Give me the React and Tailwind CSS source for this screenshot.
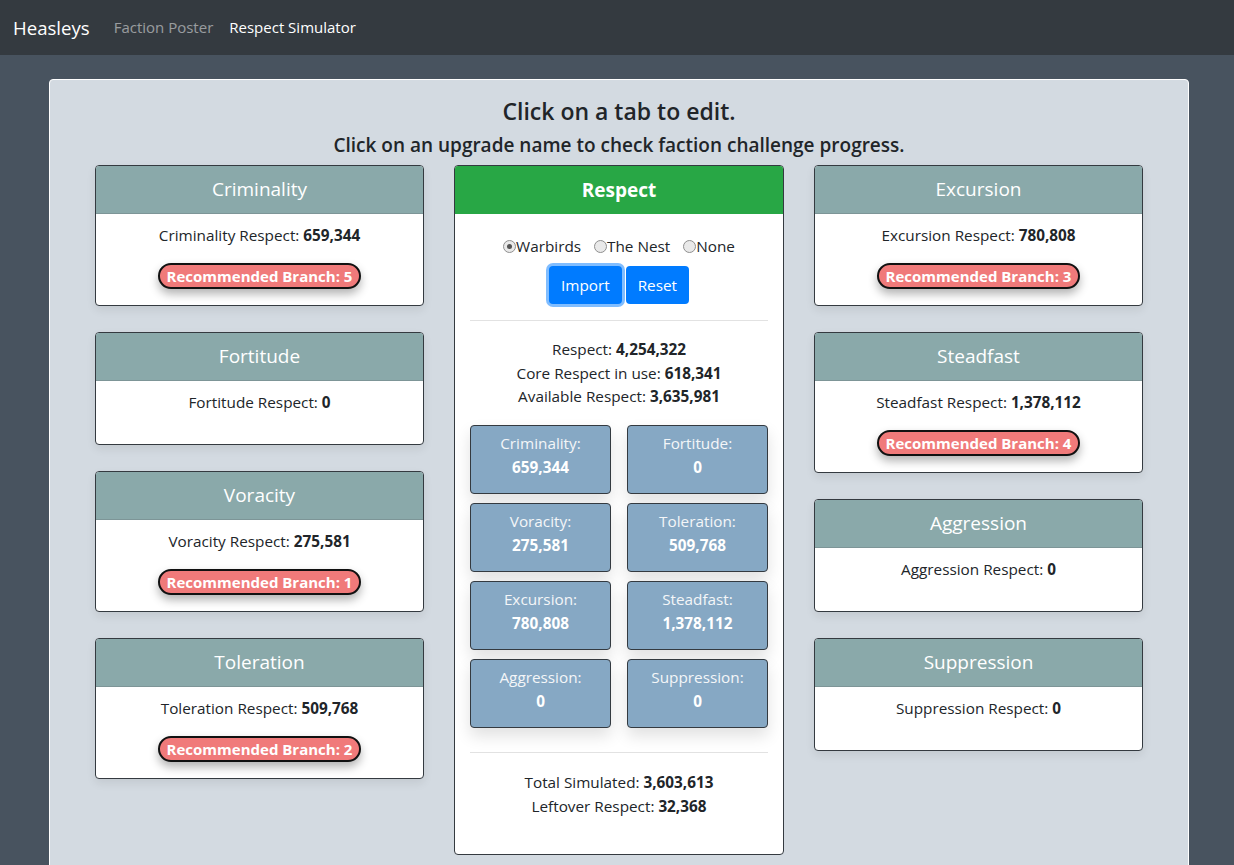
const font = { fontFamily: '"Segoe UI", "Open Sans", "Noto Sans", sans-serif' };

const leftCards = [
  { name: 'Criminality', respect: '659,344', branch: 5 },
  { name: 'Fortitude', respect: '0' },
  { name: 'Voracity', respect: '275,581', branch: 1 },
  { name: 'Toleration', respect: '509,768', branch: 2 },
];

const rightCards = [
  { name: 'Excursion', respect: '780,808', branch: 3 },
  { name: 'Steadfast', respect: '1,378,112', branch: 4 },
  { name: 'Aggression', respect: '0' },
  { name: 'Suppression', respect: '0' },
];

const boxes = [
  ['Criminality', '659,344'],
  ['Fortitude', '0'],
  ['Voracity', '275,581'],
  ['Toleration', '509,768'],
  ['Excursion', '780,808'],
  ['Steadfast', '1,378,112'],
  ['Aggression', '0'],
  ['Suppression', '0'],
];

const BranchCard = ({ name, respect, branch }) => (
  <div className="bg-white border border-[#343a40] rounded-[4px] overflow-hidden shadow-[0_4px_10px_rgba(0,0,0,0.08)]">
    <div className="h-[48px] bg-[#8aa9aa] border-b border-[#7d9597] flex items-center justify-center text-white text-[19px] cursor-pointer">
      {name}
    </div>
    <div className={`flex flex-col items-center pt-[9px] ${branch ? 'pb-[16px]' : 'pb-[30px]'}`}>
      <p className="text-[15.3px] leading-[24px] text-[#212529]">
        {name} Respect: <b>{respect}</b>
      </p>
      {branch && (
        <span className="mt-4 h-[26px] px-[7px] flex items-center rounded-full border-2 border-[#111] bg-[#f07a7a] text-white text-[15px] font-bold shadow-[0_5px_10px_rgba(0,0,0,0.3)]">
          Recommended Branch: {branch}
        </span>
      )}
    </div>
  </div>
);

const Radio = ({ label, checked }) => (
  <label className="flex items-center mr-[13px] last:mr-0">
    <span className="w-[13px] h-[13px] rounded-full border border-[#8f8f8f] bg-[#e9e9e9] flex items-center justify-center">
      {checked && <span className="w-[5px] h-[5px] rounded-full bg-[#555]" />}
    </span>
    <span className="text-[15.3px] leading-[24px] text-[#212529]">{label}</span>
  </label>
);

export default function App() {
  return (
    <div className="min-h-screen bg-[#48535f] overflow-hidden" style={font}>
      {/* Navbar */}
      <nav className="h-[55px] bg-[#343a40] flex items-center px-[13px]">
        <span className="text-white text-[18.6px] mr-[24px]">Heasleys</span>
        <span className="text-[15px] text-white/50">Faction Poster</span>
        <span className="text-[15px] text-white ml-[16px]">Respect Simulator</span>
      </nav>

      {/* Main container */}
      <div className="mt-[24px] ml-[49px] w-[1140px] bg-[#d3dae1] border border-white rounded-[4px] pt-[15px] pb-[40px]">
        <h1 className="text-center text-[23px] leading-[32px] font-semibold text-[#212529]">
          Click on a tab to edit.
        </h1>
        <h2 className="text-center text-[19px] leading-[30px] font-semibold text-[#212529] mt-[3px]">
          Click on an upgrade name to check faction challenge progress.
        </h2>

        <div className="flex justify-center items-start gap-[30px] mt-[5px]">
          {/* Left column */}
          <div className="w-[329px] flex flex-col gap-[26px]">
            {leftCards.map((c) => (
              <BranchCard key={c.name} {...c} />
            ))}
          </div>

          {/* Center card */}
          <div className="w-[330px] bg-white border border-[#343a40] rounded-[4px] overflow-hidden">
            <div className="h-[48px] bg-[#28a745] flex items-center justify-center text-white text-[19px] font-bold">
              Respect
            </div>
            <div className="px-[15px] pt-[20px] pb-[36px]">
              <div className="flex justify-center">
                <Radio label="Warbirds" checked />
                <Radio label="The Nest" />
                <Radio label="None" />
              </div>
              <div className="flex justify-center gap-[4px] mt-[8px]">
                <button className="h-[38px] px-[12px] rounded-[4px] bg-[#007bff] text-white text-[15.3px] ring-[3px] ring-[#80bdff]">
                  Import
                </button>
                <button className="h-[38px] px-[12px] rounded-[4px] bg-[#007bff] text-white text-[15.3px]">
                  Reset
                </button>
              </div>
              <hr className="mt-[16px] border-t border-[#e2e2e2]" />
              <div className="mt-[17px] text-center text-[15.3px] leading-[23.5px] text-[#212529]">
                <p>Respect: <b>4,254,322</b></p>
                <p>Core Respect in use: <b>618,341</b></p>
                <p>Available Respect: <b>3,635,981</b></p>
              </div>
              <div className="grid grid-cols-2 gap-x-[16px] gap-y-[9px] mt-[16px]">
                {boxes.map(([label, value]) => (
                  <div
                    key={label}
                    className="h-[69px] bg-[#86a8c4] border border-[#343a40] rounded-[4px] text-center text-white pt-[5px] shadow-[0_8px_16px_rgba(0,0,0,0.12)]"
                  >
                    <p className="text-[15.3px] leading-[24px] text-[#f4f6f8]">{label}:</p>
                    <p className="text-[15.3px] leading-[24px] font-bold">{value}</p>
                  </div>
                ))}
              </div>
              <hr className="mt-[24px] border-t border-[#e2e2e2]" />
              <div className="mt-[17px] text-center text-[15.3px] leading-[24px] text-[#212529]">
                <p>Total Simulated: <b>3,603,613</b></p>
                <p>Leftover Respect: <b>32,368</b></p>
              </div>
            </div>
          </div>

          {/* Right column */}
          <div className="w-[329px] flex flex-col gap-[26px]">
            {rightCards.map((c) => (
              <BranchCard key={c.name} {...c} />
            ))}
          </div>
        </div>
      </div>
    </div>
  );
}
